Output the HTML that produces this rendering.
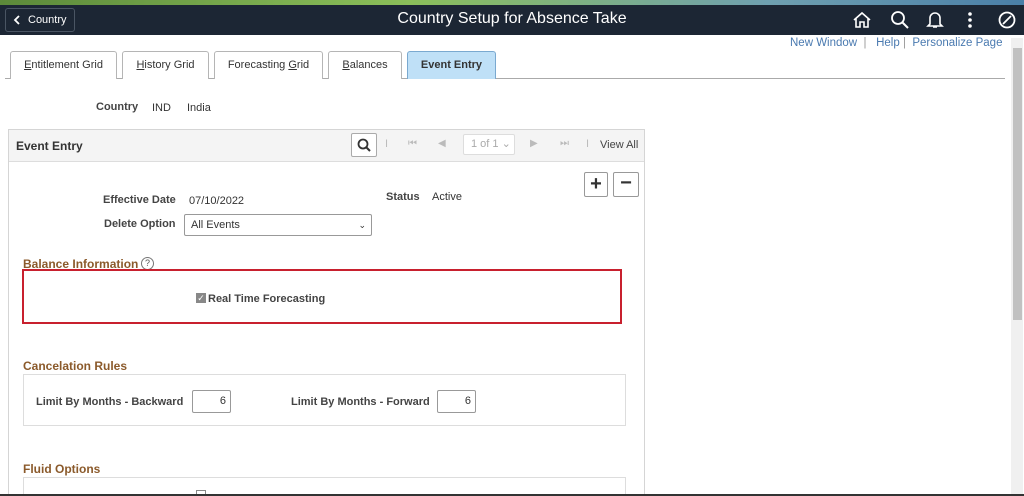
<!DOCTYPE html><html><head><style>
*{margin:0;padding:0;box-sizing:border-box}
html,body{width:1024px;height:496px;overflow:hidden}
body{background:#fff;font-family:"Liberation Sans",Arial,sans-serif;position:relative;color:#333}
.a{position:absolute}
.hdr{left:0;top:5px;width:1024px;height:30px;background:#1c2634}
.strip{left:0;top:0;width:1024px;height:5px;background:linear-gradient(90deg,#5c8a3a,#8bbf5a 40%,#6fa0b0 75%,#4a7fa8)}
.back{left:5px;top:8px;width:70px;height:24px;border:1px solid #4a5563;border-radius:3px;color:#fff;font-size:11px;line-height:22px;padding-left:22px}
.title{left:0;width:1024px;top:10px;text-align:center;color:#fff;font-size:16px}
.tab{top:51px;height:28px;border:1px solid #b5b5b5;border-bottom:none;border-radius:3px 3px 0 0;background:#fff;font-size:11px;line-height:26px;text-align:center;color:#333}
.lbl{font-size:11px;font-weight:bold;color:#444}
.v{font-size:11px;color:#333}
.sec{font-size:12px;font-weight:bold;color:#8b5a2b}
.inp{border:1px solid #999;border-radius:2px;background:#fff;font-size:11px}
</style></head><body>
<div class="a strip"></div>
<div class="a hdr"></div>
<div class="a back"><svg class="a" style="left:7px;top:6px" width="8" height="10"><path d="M6 1L2 5L6 9" stroke="#fff" stroke-width="1.8" fill="none"/></svg>Country</div>
<div class="a title">Country Setup for Absence Take</div>
<svg class="a" style="left:852px;top:11px" width="20" height="18" viewBox="0 0 20 18"><path d="M2 9L10 2L18 9M4 7V16H8V11H12V16H16V7" stroke="#fff" stroke-width="1.6" fill="none"/></svg>
<svg class="a" style="left:890px;top:10px" width="20" height="20"><circle cx="8" cy="8" r="6" stroke="#fff" stroke-width="1.8" fill="none"/><path d="M12.5 12.5L18 18" stroke="#fff" stroke-width="2"/></svg>
<svg class="a" style="left:926px;top:10px" width="18" height="20"><path d="M4 14V8a5 5 0 0110 0v6l2 2H2zM7 17h4" stroke="#fff" stroke-width="1.6" fill="none"/></svg>
<svg class="a" style="left:966px;top:11px" width="8" height="18"><circle cx="4" cy="3" r="1.8" fill="#fff"/><circle cx="4" cy="9" r="1.8" fill="#fff"/><circle cx="4" cy="15" r="1.8" fill="#fff"/></svg>
<svg class="a" style="left:997px;top:10px" width="20" height="20"><circle cx="10" cy="10" r="7.5" stroke="#fff" stroke-width="1.8" fill="none"/><path d="M6 14L14 6" stroke="#fff" stroke-width="1.8"/></svg>
<div class="a" style="left:790px;top:37px;font-size:11.5px;color:#4a7ab0;white-space:nowrap">New Window &nbsp;<span style="color:#999">|</span> &nbsp; Help <span style="color:#999">|</span> &nbsp;Personalize Page</div>
<div class="a" style="left:1011px;top:38px;width:12px;height:456px;background:#f0f0f0"></div>
<div class="a" style="left:1013px;top:48px;width:9px;height:272px;background:#c1c1c1"></div>
<div class="a" style="left:5px;top:78px;width:1000px;height:1px;background:#aaa"></div>
<div class="a tab" style="left:10px;width:107px"><u>E</u>ntitlement Grid</div>
<div class="a tab" style="left:122px;width:87px"><u>H</u>istory Grid</div>
<div class="a tab" style="left:214px;width:109px">Forecasting <u>G</u>rid</div>
<div class="a tab" style="left:328px;width:74px"><u>B</u>alances</div>
<div class="a tab" style="left:407px;width:89px;background:#bfe0f7;border-color:#7aa9d0;font-weight:bold;height:28px">Event Entry</div>
<div class="a lbl" style="left:96px;top:101px">Country</div>
<div class="a v" style="left:152px;top:102px">IND</div>
<div class="a v" style="left:187px;top:102px">India</div>
<div class="a" style="left:8px;top:129px;width:637px;height:370px;border:1px solid #d5d5d5"></div>
<div class="a" style="left:9px;top:130px;width:635px;height:32px;background:#f4f4f4;border-bottom:1px solid #ddd"></div>
<div class="a" style="left:16px;top:139px;font-size:12px;font-weight:bold;color:#333">Event Entry</div>
<div class="a inp" style="left:351px;top:133px;width:26px;height:24px;border-color:#aaa"><svg class="a" style="left:5px;top:4px" width="15" height="15"><circle cx="6" cy="6" r="4.5" stroke="#333" stroke-width="1.8" fill="none"/><path d="M9.5 9.5L13 13" stroke="#333" stroke-width="2"/></svg></div>
<div class="a" style="left:385px;top:138px;font-size:11px;color:#bbb">I</div>
<div class="a" style="left:408px;top:138px;font-size:10px;color:#bbb">⏮</div>
<div class="a" style="left:438px;top:138px;font-size:10px;color:#bbb">◀</div>
<div class="a inp" style="left:463px;top:134px;width:52px;height:21px;border-color:#ddd;color:#aaa;line-height:19px;padding-left:7px">1 of 1 ⌄</div>
<div class="a" style="left:530px;top:138px;font-size:10px;color:#bbb">▶</div>
<div class="a" style="left:560px;top:138px;font-size:10px;color:#bbb">⏭</div>
<div class="a" style="left:586px;top:138px;font-size:11px;color:#bbb">I</div>
<div class="a v" style="left:600px;top:139px;color:#444">View All</div>
<div class="a inp" style="left:584px;top:172px;width:24px;height:25px;border-color:#999;font-size:20px;font-weight:bold;text-align:center;line-height:22px">+</div>
<div class="a inp" style="left:613px;top:172px;width:26px;height:25px;border-color:#999;font-size:20px;font-weight:bold;text-align:center;line-height:20px">−</div>
<div class="a lbl" style="left:103px;top:194px">Effective Date</div>
<div class="a v" style="left:189px;top:195px">07/10/2022</div>
<div class="a lbl" style="left:386px;top:191px">Status</div>
<div class="a v" style="left:432px;top:191px">Active</div>
<div class="a lbl" style="left:104px;top:218px">Delete Option</div>
<div class="a inp" style="left:184px;top:214px;width:188px;height:22px;line-height:20px;padding-left:6px">All Events<span class="a" style="right:5px;top:0;font-size:9px">⌄</span></div>
<div class="a sec" style="left:23px;top:257px;text-decoration:underline">Balance Information</div>
<div class="a" style="left:141px;top:257px;width:13px;height:13px;border:1px solid #777;border-radius:50%;font-size:9px;text-align:center;line-height:11px;color:#555">?</div>
<div class="a" style="left:22px;top:269px;width:600px;height:55px;border:2px solid #c8202e"></div>
<div class="a" style="left:196px;top:293px;width:10px;height:10px;background:#888;color:#fff;font-size:9px;line-height:10px;text-align:center">✓</div>
<div class="a lbl" style="left:208px;top:293px">Real Time Forecasting</div>
<div class="a sec" style="left:23px;top:359px">Cancelation Rules</div>
<div class="a" style="left:23px;top:374px;width:603px;height:52px;border:1px solid #ddd"></div>
<div class="a lbl" style="left:36px;top:396px">Limit By Months - Backward</div>
<div class="a inp" style="left:192px;top:390px;width:39px;height:23px;text-align:right;padding-right:4px;line-height:20px">6</div>
<div class="a lbl" style="left:291px;top:396px">Limit By Months - Forward</div>
<div class="a inp" style="left:437px;top:390px;width:39px;height:23px;text-align:right;padding-right:4px;line-height:20px">6</div>
<div class="a sec" style="left:23px;top:462px">Fluid Options</div>
<div class="a" style="left:23px;top:477px;width:603px;height:17px;border:1px solid #ddd;border-bottom:none"></div>
<div class="a" style="left:196px;top:490px;width:10px;height:4px;border:1px solid #888;border-bottom:none"></div>
<div class="a" style="left:0;top:494px;width:1024px;height:2px;background:#333"></div>
</body></html>
